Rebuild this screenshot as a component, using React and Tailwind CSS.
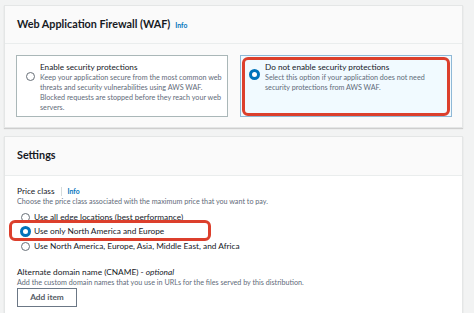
import React from "react";

const font = { fontFamily: 'Lato, "Liberation Sans", Arial, sans-serif' };

function Radio({ checked }) {
  return checked ? (
    <span className="inline-block shrink-0 w-[11px] h-[11px] rounded-full border-[3px] border-[#0073bb] bg-white" />
  ) : (
    <span className="inline-block shrink-0 w-[9px] h-[9px] rounded-full border border-[#687078] bg-white" />
  );
}

export default function App() {
  return (
    <div className="w-[474px] h-[313px] overflow-hidden bg-[#f2f3f3] pl-[4px] pt-[5px]" style={font}>
      <div className="w-[459px] h-[123px] bg-[#fafafa] border border-[#e4e6e6] shadow-[0_1px_1px_rgba(0,0,0,0.15)] flex flex-col">
        <div className="h-[38px] shrink-0 border-b border-[#eaeded] flex items-center pl-[12px]">
          <span className="text-[10.8px] font-bold text-[#16191f]">Web Application Firewall (WAF)</span>
          <span className="ml-[5px] text-[6.8px] font-bold text-[#0073bb] mt-[1px]">Info</span>
        </div>
        <div className="flex gap-[12px] pl-[11px] pt-[11px]">
          <div className="w-[212px] h-[62px] bg-white border border-[#aab7b8] flex items-start pl-[9px] pt-[5px] gap-[5px]">
            <div className="mt-[2px]"><Radio /></div>
            <div className="flex flex-col">
              <span className="text-[8.2px] leading-[12px] text-[#16191f]">Enable security protections</span>
              <span className="text-[7.2px] leading-[10px] text-[#5f6b7a] w-[185px]">Keep your application secure from the most common web threats and security vulnerabilities using AWS WAF. Blocked requests are stopped before they reach your web servers.</span>
            </div>
          </div>
          <div className="relative w-[212px] h-[62px] bg-[#f1faff] border border-[#8fb8d6] flex items-start pl-[8px] pt-[5px] gap-[5px]">
            <div className="mt-[1px]"><Radio checked /></div>
            <div className="flex flex-col">
              <span className="text-[8.2px] leading-[12px] text-[#16191f]">Do not enable security protections</span>
              <span className="text-[7.2px] leading-[10px] text-[#5f6b7a] w-[170px]">Select this option if your application does not need security protections from AWS WAF.</span>
            </div>
            <div className="absolute left-[1px] top-[1px] right-[1px] bottom-[0px] border-[3px] border-[#dc3f2c] rounded-[6px]" />
          </div>
        </div>
      </div>

      <div className="mt-[8px] w-[459px] h-[200px] bg-white border border-[#e4e6e6] shadow-[0_1px_1px_rgba(0,0,0,0.15)] flex flex-col">
        <div className="h-[39px] shrink-0 bg-[#fafafa] border-b border-[#eaeded] flex items-center pl-[12px] pb-[2px]">
          <span className="text-[10.8px] font-bold text-[#16191f]">Settings</span>
        </div>
        <div className="pl-[12px] pt-[9px] flex flex-col">
          <div className="flex items-center h-[12px]">
            <span className="text-[8.3px] text-[#16191f]">Price class</span>
            <span className="ml-[6px] mr-[6px] w-px h-[9px] bg-[#d5dbdb]" />
            <span className="text-[6.8px] font-bold text-[#0073bb]">Info</span>
          </div>
          <span className="text-[7.2px] leading-[10px] text-[#5f6b7a]">Choose the price class associated with the maximum price that you want to pay.</span>
          <div className="flex items-center gap-[4px] h-[14px] mt-[3px] pl-[4px]">
            <Radio />
            <span className="text-[8.3px] text-[#16191f]">Use all edge locations (best performance)</span>
          </div>
          <div className="relative flex items-center gap-[3px] h-[14px] pl-[3px]">
            <Radio checked />
            <span className="text-[8.3px] text-[#16191f]">Use only North America and Europe</span>
            <div className="absolute left-[-8px] top-[-4px] w-[202px] h-[21px] border-[3px] border-[#dc3f2c] rounded-[6px]" />
          </div>
          <div className="flex items-center gap-[4px] h-[15px] pl-[4px] mt-[1px]">
            <Radio />
            <span className="text-[8.3px] text-[#16191f]">Use North America, Europe, Asia, Middle East, and Africa</span>
          </div>
          <span className="mt-[12px] text-[8.3px] leading-[12px] text-[#16191f]">Alternate domain name (CNAME) - <i>optional</i></span>
          <span className="text-[7.2px] leading-[10px] text-[#5f6b7a]">Add the custom domain names that you use in URLs for the files served by this distribution.</span>
          <div className="mt-[0px] w-[60px] h-[19px] border border-[#6b7785] flex items-center justify-center text-[8.3px] font-bold text-[#545b64]">Add item</div>
        </div>
      </div>
    </div>
  );
}
